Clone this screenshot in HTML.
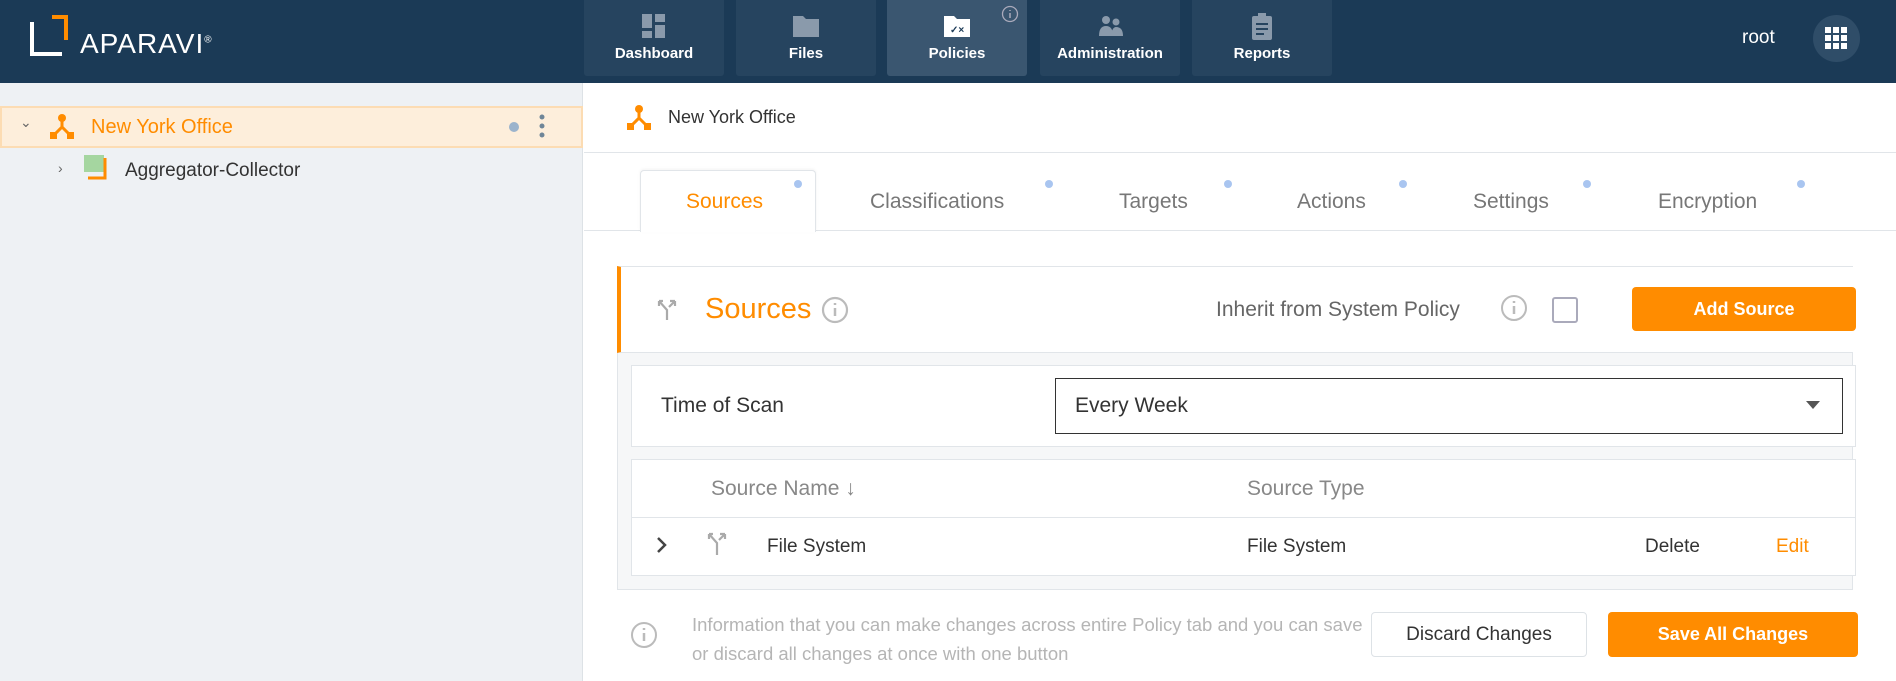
<!DOCTYPE html>
<html><head><meta charset="utf-8"><style>
*{box-sizing:border-box;margin:0;padding:0}
body{width:1896px;height:681px;overflow:hidden;font-family:"Liberation Sans",sans-serif;background:#fff;position:relative;color:#333}
.abs{position:absolute}
.hdr{left:0;top:0;width:1896px;height:83px;background:#1b3a56}
.nav{top:0;height:76px;width:140px;background:#26445f;border-radius:0 0 3px 3px;color:#fff;font-size:15px;font-weight:bold;text-align:center}
.nav span{position:absolute;left:0;right:0;top:45px}
.nav svg{position:absolute;left:56px;top:12px}
.left{left:0;top:83px;width:583px;height:598px;background:#eef1f4;border-right:1px solid #dde2e6}
.tab{top:190px;font-size:21px;color:#777;}
.dot{width:8px;height:8px;border-radius:50%;background:#a9c5f0;top:180px}
.btn{background:#ff8c00;color:#fff;font-weight:bold;font-size:18px;text-align:center;border-radius:4px}
</style></head><body>
<div class="abs hdr"></div>
<svg class="abs" style="left:28px;top:14px" width="50" height="44"><path d="M4 8V40H34" stroke="#fff" stroke-width="4" fill="none"/><path d="M24 3H38V26" stroke="#ff8c00" stroke-width="4" fill="none"/></svg>
<div class="abs" style="left:80px;top:28px;color:#fff;font-size:28px;letter-spacing:1px">APARAVI<sup style="font-size:10px">®</sup></div>
<div class="abs nav" style="left:584px"><svg width="28" height="28"><rect x="2" y="2" width="10" height="14" fill="#8a9aab"/><rect x="15" y="2" width="10" height="8" fill="#8a9aab"/><rect x="2" y="19" width="10" height="7" fill="#8a9aab"/><rect x="15" y="13" width="10" height="13" fill="#8a9aab"/></svg><span>Dashboard</span></div>
<div class="abs nav" style="left:736px"><svg width="28" height="28"><path d="M1 4H11L14 7H27V25H1Z" fill="#8a9aab"/></svg><span>Files</span></div>
<div class="abs nav" style="left:887px;background:#3a5670"><svg width="30" height="28"><path d="M1 4H11L14 7H27V25H1Z" fill="#fff"/><text x="7" y="21" font-size="10" font-weight="bold" fill="#1b3a56" font-family="Liberation Sans">✓×</text></svg><span>Policies</span>
<svg style="left:114px;top:5px" width="18" height="18"><circle cx="9" cy="9" r="7.5" stroke="#aab" fill="none" stroke-width="1.3"/><path d="M9 8V13M9 5V6" stroke="#aab" stroke-width="1.5"/></svg></div>
<div class="abs nav" style="left:1040px"><svg width="30" height="28"><circle cx="10" cy="8" r="4" fill="#8a9aab"/><circle cx="20" cy="10" r="3.5" fill="#8a9aab"/><path d="M3 24Q3 14 10 14Q17 14 17 24Z M15 24Q16 15 20 15Q27 15 27 24Z" fill="#8a9aab"/></svg><span>Administration</span></div>
<div class="abs nav" style="left:1192px"><svg width="28" height="30"><rect x="4" y="4" width="20" height="24" rx="2" fill="#8a9aab"/><rect x="10" y="1" width="8" height="5" fill="#8a9aab"/><path d="M8 12H20M8 17H20M8 22H16" stroke="#26445f" stroke-width="2"/></svg><span>Reports</span></div>
<div class="abs" style="left:1742px;top:27px;color:#fff;font-size:19px">root</div>
<div class="abs" style="left:1813px;top:15px;width:47px;height:47px;border-radius:50%;background:#2f4d68"><svg style="position:absolute;left:12px;top:12px" width="23" height="23"><g fill="#fff"><rect x="0" y="0" width="6" height="6"/><rect x="8" y="0" width="6" height="6"/><rect x="16" y="0" width="6" height="6"/><rect x="0" y="8" width="6" height="6"/><rect x="8" y="8" width="6" height="6"/><rect x="16" y="8" width="6" height="6"/><rect x="0" y="16" width="6" height="6"/><rect x="8" y="16" width="6" height="6"/><rect x="16" y="16" width="6" height="6"/></g></svg></div>

<div class="abs left"></div>
<div class="abs" style="left:0;top:106px;width:583px;height:42px;background:#fdeedb;border:2px solid #fcdcb3"></div>
<div class="abs" style="left:20px;top:114px;color:#666;font-size:14px">⌄</div>
<svg class="abs" style="left:48px;top:112px" width="28" height="28"><path d="M14 6V15L6 23M14 15L22 23" stroke="#ff8c00" stroke-width="3" fill="none"/><circle cx="14" cy="6" r="4" fill="#ff8c00"/><rect x="2" y="20" width="7" height="7" fill="#ff8c00"/><rect x="19" y="20" width="7" height="7" fill="#ff8c00"/></svg>
<div class="abs" style="left:91px;top:116px;color:#ff8c00;font-size:20px">New York Office</div>
<div class="abs" style="left:509px;top:122px;width:10px;height:10px;border-radius:50%;background:#9bb3cc"></div>
<svg class="abs" style="left:538px;top:114px" width="8" height="26"><circle cx="4" cy="3" r="2.5" fill="#6f8597"/><circle cx="4" cy="12" r="2.5" fill="#6f8597"/><circle cx="4" cy="21" r="2.5" fill="#6f8597"/></svg>
<div class="abs" style="left:58px;top:160px;color:#666;font-size:14px">›</div>
<svg class="abs" style="left:83px;top:154px" width="26" height="26"><rect x="1" y="1" width="20" height="17" fill="#a5d6a0"/><path d="M5 24H22V4" stroke="#ff8c00" stroke-width="3" fill="none"/></svg>
<div class="abs" style="left:125px;top:160px;color:#333;font-size:19px">Aggregator-Collector</div>

<svg class="abs" style="left:625px;top:103px" width="28" height="28"><path d="M14 6V15L6 23M14 15L22 23" stroke="#ff8c00" stroke-width="3" fill="none"/><circle cx="14" cy="6" r="4" fill="#ff8c00"/><rect x="2" y="20" width="7" height="7" fill="#ff8c00"/><rect x="19" y="20" width="7" height="7" fill="#ff8c00"/></svg>
<div class="abs" style="left:668px;top:107px;font-size:18px;color:#333">New York Office</div>
<div class="abs" style="left:584px;top:152px;width:1312px;height:1px;background:#e1e5e9"></div>
<div class="abs" style="left:584px;top:230px;width:1312px;height:1px;background:#e1e5e9"></div>
<div class="abs" style="left:640px;top:170px;width:176px;height:62px;background:#fff;border:1px solid #e1e5e9;border-bottom:none;border-radius:4px 4px 0 0;box-shadow:0 -1px 3px rgba(0,0,0,.05)"></div>
<div class="abs tab" style="left:686px;color:#ff8c00">Sources</div><div class="abs dot" style="left:794px"></div>
<div class="abs tab" style="left:870px">Classifications</div><div class="abs dot" style="left:1045px"></div>
<div class="abs tab" style="left:1119px">Targets</div><div class="abs dot" style="left:1224px"></div>
<div class="abs tab" style="left:1297px">Actions</div><div class="abs dot" style="left:1399px"></div>
<div class="abs tab" style="left:1473px">Settings</div><div class="abs dot" style="left:1583px"></div>
<div class="abs tab" style="left:1658px">Encryption</div><div class="abs dot" style="left:1797px"></div>

<div class="abs" style="left:617px;top:266px;width:1236px;height:324px;background:#f6f7f8;border:1px solid #e1e5e9"></div>
<div class="abs" style="left:617px;top:266px;width:1236px;height:87px;background:#fff;border-left:4px solid #ff8c00;border-bottom:1px solid #e1e5e9;border-top:1px solid #e1e5e9"></div>
<svg class="abs" style="left:655px;top:298px" width="24" height="24"><path d="M4 3L8 3M4 3V8M4 3L12 12V22M20 3L14 9M20 3H15M20 3V8" stroke="#aaa" stroke-width="2.2" fill="none"/></svg>
<div class="abs" style="left:705px;top:293px;font-size:29px;color:#ff8c00">Sources</div>
<svg class="abs" style="left:821px;top:296px" width="28" height="28"><circle cx="14" cy="14" r="12" stroke="#bbb" stroke-width="2.2" fill="none"/><path d="M14 12V20M14 7V9" stroke="#bbb" stroke-width="2.5"/></svg>
<div class="abs" style="left:1216px;top:298px;font-size:21px;color:#666">Inherit from System Policy</div>
<svg class="abs" style="left:1500px;top:294px" width="28" height="28"><circle cx="14" cy="14" r="12" stroke="#bbb" stroke-width="2" fill="none"/><path d="M14 12V20M14 7V9" stroke="#bbb" stroke-width="2.5"/></svg>
<div class="abs" style="left:1552px;top:297px;width:26px;height:26px;border:2px solid #aab;border-radius:3px;background:#fff"></div>
<div class="abs btn" style="left:1632px;top:287px;width:224px;height:44px;line-height:44px">Add Source</div>

<div class="abs" style="left:631px;top:365px;width:1225px;height:82px;background:#fff;border:1px solid #e1e5e9"></div>
<div class="abs" style="left:661px;top:394px;font-size:21px;color:#333">Time of Scan</div>
<div class="abs" style="left:1055px;top:378px;width:788px;height:56px;border:1px solid #333;background:#fff"></div>
<div class="abs" style="left:1075px;top:394px;font-size:21px;color:#333">Every Week</div>
<svg class="abs" style="left:1806px;top:401px" width="14" height="8"><path d="M0 0H14L7 8Z" fill="#555"/></svg>

<div class="abs" style="left:631px;top:459px;width:1225px;height:117px;background:#fff;border:1px solid #e1e5e9"></div>
<div class="abs" style="left:632px;top:517px;width:1223px;height:1px;background:#e1e5e9"></div>
<div class="abs" style="left:711px;top:477px;font-size:21px;color:#888">Source Name ↓</div>
<div class="abs" style="left:1247px;top:477px;font-size:21px;color:#888">Source Type</div>
<svg class="abs" style="left:656px;top:536px" width="12" height="18"><path d="M2 2L9 9L2 16" stroke="#444" stroke-width="2.5" fill="none"/></svg>
<svg class="abs" style="left:705px;top:531px" width="24" height="26"><path d="M4 3L8 3M4 3V8M4 3L12 12V24M20 3L14 9M20 3H15M20 3V8" stroke="#aaa" stroke-width="2.2" fill="none"/></svg>
<div class="abs" style="left:767px;top:536px;font-size:19px;color:#333">File System</div>
<div class="abs" style="left:1247px;top:536px;font-size:19px;color:#333">File System</div>
<div class="abs" style="left:1645px;top:536px;font-size:19px;color:#333">Delete</div>
<div class="abs" style="left:1776px;top:536px;font-size:19px;color:#ff8c00">Edit</div>

<svg class="abs" style="left:630px;top:621px" width="28" height="28"><circle cx="14" cy="14" r="12" stroke="#bbb" stroke-width="2" fill="none"/><path d="M14 12V20M14 7V9" stroke="#bbb" stroke-width="2.5"/></svg>
<div class="abs" style="left:692px;top:610px;font-size:18.5px;color:#b5b5b5;line-height:29px;width:680px">Information that you can make changes across entire Policy tab and you can save or discard all changes at once with one button</div>
<div class="abs" style="left:1371px;top:612px;width:216px;height:45px;border:1px solid #dde2e6;border-radius:4px;font-size:19px;text-align:center;line-height:43px;color:#333">Discard Changes</div>
<div class="abs btn" style="left:1608px;top:612px;width:250px;height:45px;line-height:45px">Save All Changes</div>
</body></html>
